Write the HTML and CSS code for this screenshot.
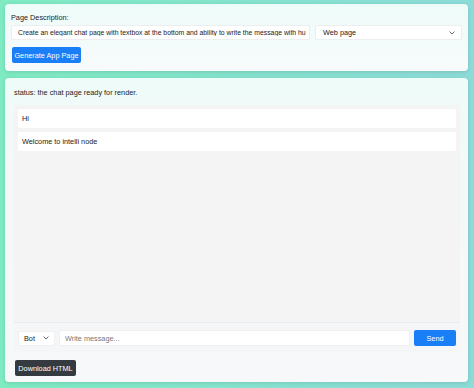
FILE: index.html
```html
<!DOCTYPE html>
<html>
<head>
<meta charset="utf-8">
<link rel="stylesheet" href="styles.css">
</head>
<body>
<div class="page">
  <section class="card top">
    <label class="lbl">Page Description:</label>
    <div class="row">
      <input class="field desc" value="Create an elegant chat page with textbox at the bottom and ability to write the message with hu">
      <div class="field sel">
        <span>Web page</span>
        <svg width="6" height="4" viewBox="0 0 6 4"><path d="M0.6 0.6 L3 3 L5.4 0.6" fill="none" stroke="#555" stroke-width="0.9"/></svg>
      </div>
    </div>
    <button class="btn primary gen">Generate App Page</button>
  </section>
  <section class="card main">
    <div class="status">status: the chat page ready for render.</div>
    <div class="chat">
      <div class="msgs">
        <div class="msg">Hi</div>
        <div class="msg">Welcome to intelli node</div>
      </div>
      <div class="compose">
        <div class="field who">
          <span>Bot</span>
          <svg width="6" height="4" viewBox="0 0 6 4"><path d="M0.6 0.6 L3 3 L5.4 0.6" fill="none" stroke="#555" stroke-width="0.9"/></svg>
        </div>
        <input class="field text" placeholder="Write message...">
        <button class="btn primary send">Send</button>
      </div>
    </div>
    <button class="btn dark dl">Download HTML</button>
  </section>
</div>
</body>
</html>
```
FILE: styles.css
```css
* { box-sizing: border-box; }
html, body { margin: 0; padding: 0; }
body {
  width: 474px;
  height: 388px;
  overflow: hidden;
  background: linear-gradient(to right, #7eebc2, #8cdbd8);
  font-family: "Liberation Sans", Arial, sans-serif;
  font-size: 7.3px;
  color: #222;
}
.page {
  padding: 4px 6px 0 5px;
  display: flex;
  flex-direction: column;
  gap: 7px;
}
.card {
  border-radius: 4px;
  background: linear-gradient(to bottom, #eefcf9, #f7fafb);
  box-shadow: 0 1px 4px rgba(0,0,0,0.12);
}
.top {
  height: 67px;
  padding: 10px 6px 0 6px;
  display: flex;
  flex-direction: column;
}
.lbl { display: block; line-height: 8px; color: #222; }
.row {
  display: flex;
  gap: 5px;
  margin-top: 3px;
}
.field {
  height: 15px;
  border: 1px solid #eceeef;
  background: #fff;
  border-radius: 2px;
  font: inherit;
  color: #222;
  padding: 0 5px;
  outline: none;
}
.desc { width: 299px; font-size: 6.85px; padding: 0 1px 0 6px; }
.sel {
  flex: 1;
  display: flex;
  align-items: center;
  justify-content: space-between;
  padding: 0 6px 0 7px;
}
.btn {
  border: none;
  border-radius: 2px;
  font: inherit;
  color: #fff;
  padding: 0;
  height: 16px;
}
.primary { background: #1a7ef6; }
.gen { margin-top: 7px; width: 69px; margin-left: 1px; }
.main {
  height: 304px;
  padding: 11px 8px 0 9px;
  display: flex;
  flex-direction: column;
  background: linear-gradient(to bottom, #eefcf9, #f5f8f9 30%, #f6f8f9);
}
.status { line-height: 8px; color: #222; }
.chat {
  margin-top: 8px;
  background: #f4f4f5;
  border-radius: 2px;
  display: flex;
  flex-direction: column;
  height: 248px;
}
.msgs {
  flex: 1;
  padding: 4px 4px;
  display: flex;
  flex-direction: column;
  gap: 4px;
  border-bottom: 1px solid #ebeced;
}
.msg {
  background: #fff;
  border-radius: 2px;
  height: 19px;
  line-height: 19px;
  padding: 0 4px;
  color: #222;
}
.compose {
  height: 30px;
  display: flex;
  align-items: center;
  gap: 4px;
  padding: 0 4px;
  background: #f5f6f7;
}
.who {
  width: 37px;
  display: flex;
  align-items: center;
  justify-content: space-between;
  padding: 0 5px;
  border-color: #f0f0f0;
}
.text { flex: 1; height: 16px; border-color: #f0f0f0; }
.text::placeholder { color: #777; }
.send { width: 42px; height: 16px; }
.dark { background: #343a40; }
.dl { margin-top: 7px; width: 61px; margin-left: 1px; }
```
